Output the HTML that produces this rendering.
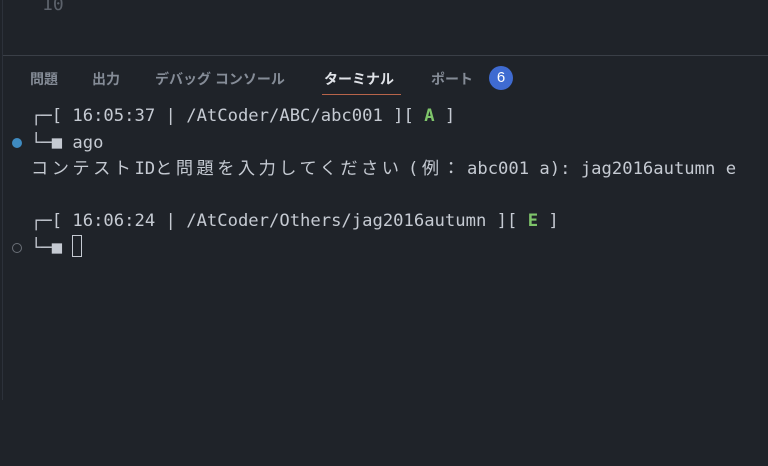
<!DOCTYPE html>
<html><head><meta charset="utf-8"><style>
html,body{margin:0;padding:0;background:#1f2329;width:768px;height:466px;overflow:hidden;position:relative;}
.lnum{position:absolute;left:42px;top:-6px;font:18px "DejaVu Sans Mono","Liberation Mono",monospace;color:#5c626b;}
.lb{position:absolute;left:2px;top:0;width:1px;height:400px;background:#2c313a;}
.sep{position:absolute;left:3px;right:0;top:55px;height:1px;background:#3a3f47;}
.tab{position:absolute;top:69px;font:bold 14px "Liberation Sans","Noto Sans CJK JP",sans-serif;color:#858c97;white-space:nowrap;}
.tab.act{color:#dfe2e7;}
.ul{position:absolute;left:322px;top:94px;width:79px;height:1px;background:#b8644a;}
.badge{position:absolute;left:489px;top:66px;width:24px;height:24px;border-radius:50%;background:#3f6bd1;color:#fff;font:15px "Liberation Sans",sans-serif;text-align:center;line-height:24px;}
.t{position:absolute;left:31px;font:17.2px "DejaVu Sans Mono","Noto Sans CJK JP",monospace;color:#c5cad2;white-space:pre;line-height:26px;}
.j{letter-spacing:3.5px;}
.g{color:#7ec46a;font-weight:bold;}
.d1{position:absolute;left:12px;top:138px;width:10px;height:10px;border-radius:50%;background:#3f8bc1;}
.d2{position:absolute;left:12px;top:243px;width:8px;height:8px;border-radius:50%;border:1px solid #6a6f77;}
.cur{display:inline-block;width:8px;height:20px;border:1px solid #c5cad2;vertical-align:-4px;}
</style></head><body>
<div class="lnum">10</div>
<div class="lb"></div>
<div class="sep"></div>
<div class="tab" style="left:30px">問題</div>
<div class="tab" style="left:92px">出力</div>
<div class="tab" style="left:155px">デバッグ コンソール</div>
<div class="tab act" style="left:324px">ターミナル</div>
<div class="tab" style="left:431px">ポート</div>
<div class="ul"></div>
<div class="badge">6</div>
<div class="t" style="top:103px">┌─[ 16:05:37 | /AtCoder/ABC/abc001 ][ <span class="g">A</span> ]</div>
<div class="d1"></div>
<div class="t" style="top:130px">└─■ ago</div>
<div class="t j" style="top:156px">コンテスト<span style="letter-spacing:0">ID</span>と問題を入力してください</div>
<div class="t j" style="top:156px;left:408px">(例：</div>
<div class="t" style="top:156px;left:467px">abc001 a): jag2016autumn e</div>
<div class="t" style="top:208px">┌─[ 16:06:24 | /AtCoder/Others/jag2016autumn ][ <span class="g">E</span> ]</div>
<div class="d2"></div>
<div class="t" style="top:235px">└─■ <span class="cur"></span></div>
</body></html>
